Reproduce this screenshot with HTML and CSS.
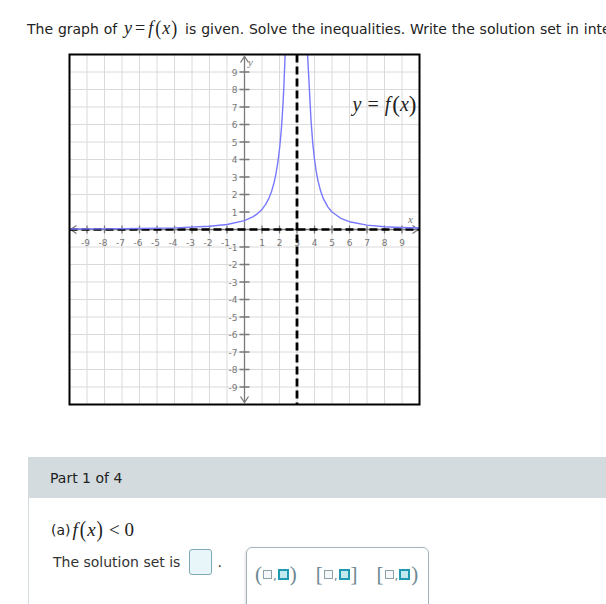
FILE: index.html
```html
<!DOCTYPE html>
<html>
<head>
<meta charset="utf-8">
<link rel="stylesheet" href="styles.css">
</head>
<body>
<div class="title">The graph of <span class="math"><i>y</i><span class="eq">=</span><i class="fi">f</i><span class="paren">(</span><i>x</i><span class="paren">)</span></span> is given. Solve the inequalities. Write the solution set in interval notation.</div>

<svg class="graph" width="356" height="356" viewBox="0 0 356 356">
  <defs>
    <clipPath id="frame"><rect x="0" y="0" width="350" height="350"/></clipPath>
  </defs>
  <g transform="translate(1.5,1.5)">
    <rect x="0" y="0" width="350" height="350" fill="#fff"/>
    <path class="grid" d="M17.5 0V350M35 0V350M52.5 0V350M70 0V350M87.5 0V350M105 0V350M122.5 0V350M140 0V350M157.5 0V350M192.5 0V350M210 0V350M227.5 0V350M245 0V350M262.5 0V350M280 0V350M297.5 0V350M315 0V350M332.5 0V350
    M0 17.5H350M0 35H350M0 52.5H350M0 70H350M0 87.5H350M0 105H350M0 122.5H350M0 140H350M0 157.5H350M0 192.5H350M0 210H350M0 227.5H350M0 245H350M0 262.5H350M0 280H350M0 297.5H350M0 315H350M0 332.5H350"/>
    <path class="axis" d="M175 2V348M1 175H349"/>
    <path class="axis" d="M171 8L175 2L179 8M171 342L175 348L179 342M7 171L1 175L7 179M343 171L349 175L343 179"/>
    <path class="axis" d="M170 17.5H180M170 35H180M170 52.5H180M170 70H180M170 87.5H180M170 105H180M170 122.5H180M170 140H180M170 157.5H180M170 192.5H180M170 210H180M170 227.5H180M170 245H180M170 262.5H180M170 280H180M170 297.5H180M170 315H180M170 332.5H180
    M17.5 171V179M35 171V179M52.5 171V179M70 171V179M87.5 171V179M105 171V179M122.5 171V179M140 171V179M157.5 171V179M192.5 171V179M210 171V179M227.5 171V179M245 171V179M262.5 171V179M280 171V179M297.5 171V179M315 171V179M332.5 171V179"/>
    <g class="tick-x">
      <text x="16" y="191.5">-9</text>
      <text x="33.5" y="191.5">-8</text>
      <text x="51" y="191.5">-7</text>
      <text x="68.5" y="191.5">-6</text>
      <text x="86" y="191.5">-5</text>
      <text x="103.5" y="191.5">-4</text>
      <text x="121" y="191.5">-3</text>
      <text x="138.5" y="191.5">-2</text>
      <text x="156" y="191.5">-1</text>
      <text x="192.5" y="191.5">1</text>
      <text x="210" y="191.5">2</text>
      <text x="227.5" y="191.5">3</text>
      <text x="245" y="191.5">4</text>
      <text x="262.5" y="191.5">5</text>
      <text x="280" y="191.5">6</text>
      <text x="297.5" y="191.5">7</text>
      <text x="315" y="191.5">8</text>
      <text x="332.5" y="191.5">9</text>
    </g>
    <g class="tick-y">
      <text x="168" y="21">9</text>
      <text x="168" y="38.5">8</text>
      <text x="168" y="56">7</text>
      <text x="168" y="73.5">6</text>
      <text x="168" y="91">5</text>
      <text x="168" y="108.5">4</text>
      <text x="168" y="126">3</text>
      <text x="168" y="143.5">2</text>
      <text x="168" y="161">1</text>
      <text x="168" y="196">-1</text>
      <text x="168" y="213.5">-2</text>
      <text x="168" y="231">-3</text>
      <text x="168" y="248.5">-4</text>
      <text x="168" y="266">-5</text>
      <text x="168" y="283.5">-6</text>
      <text x="168" y="301">-7</text>
      <text x="168" y="318.5">-8</text>
      <text x="168" y="336">-9</text>
    </g>
    <text class="axis-name" x="178.5" y="11">y</text>
    <text class="axis-name" x="338.5" y="168">x</text>
    <path class="dash" d="M0 175H350"/>
    <path class="dash dash-v" d="M227.5 0V350"/>
    <g clip-path="url(#frame)">
      <polyline class="curve" points="0,174.52 35,174.33 70,174.0 105,173.36 140,171.78 157.5,169.97 175,166.06 183.75,162.12 188.13,159.1 192.5,154.88 196,150.15 199.5,143.55 202.13,136.71 204.75,127.37 206.5,119.1 208.25,108.47 210,94.5 210.88,85.8 211.75,75.6 212.63,63.58 213.5,49.22 214.38,31.89 215.64,0 215.9,-5"/>
      <polyline class="curve" points="237.9,-5 238.06,0 239.75,32.14 241.5,65.63 243.25,88.58 245,105 246.75,117.15 248.5,126.39 251.13,136.59 253.75,143.89 258.13,152.14 262.5,157.5 271.25,163.8 280,167.22 297.5,170.63 315,172.2 332.5,173.06 350,173.57"/>
    </g>
    <text class="fn-label" x="283" y="56"><tspan class="it">y</tspan><tspan dx="6">=</tspan><tspan class="it" dx="6">f</tspan><tspan class="big-paren" dx="2" dy="1">(</tspan><tspan class="it" dy="-1">x</tspan><tspan class="big-paren" dy="1">)</tspan></text>
    <rect class="frame" x="0" y="0" width="350" height="350"/>
  </g>
</svg>

<div class="part">
  <div class="part-head">Part 1 of 4</div>
  <div class="part-body">
    <div class="question"><span class="lbl">(a)</span><span class="math big"><i class="fi">f</i><span class="paren">(</span><i>x</i><span class="paren">)</span><span class="lt">&lt;</span>0</span></div>
    <div class="answer-row">
      <div class="answer">
        <span class="ans-text">The solution set is</span>
        <span class="input-box"></span>
        <span class="period">.</span>
      </div>
      <div class="palette">
        <div class="btn"><span class="br">(</span><span class="sq"></span><span class="comma">,</span><span class="sq active"></span><span class="br">)</span></div>
        <div class="btn"><span class="br">[</span><span class="sq"></span><span class="comma">,</span><span class="sq active"></span><span class="br">]</span></div>
        <div class="btn"><span class="br">[</span><span class="sq"></span><span class="comma">,</span><span class="sq active"></span><span class="br">)</span></div>
      </div>
    </div>
  </div>
</div>
</body>
</html>
```

FILE: styles.css
```css
html, body {
  margin: 0;
  padding: 0;
  background: #fff;
}
body {
  width: 606px;
  height: 604px;
  overflow: hidden;
  font-family: "DejaVu Sans", Verdana, sans-serif;
  font-size: 14px;
  color: #222;
}
.title {
  padding: 18px 0 5px 27px;
  line-height: 20px;
  height: 20px;
  white-space: nowrap;
  overflow: hidden;
  word-spacing: 0.4px;
}
.math {
  font-family: "Liberation Serif", "DejaVu Serif", serif;
  font-size: 18px;
  color: #222;
  margin: 0 2px;
}
.math i {
  font-style: italic;
}
.eq {
  padding: 0 3px;
}
.fi {
  padding-right: 1px;
}
.paren {
  display: inline-block;
  transform: scaleY(1.2);
  padding: 0 1px;
}
.graph {
  display: block;
  margin: 10px 0 0 68px;
}
.grid {
  stroke: #dadada;
  stroke-width: 1;
  fill: none;
}
.axis {
  stroke: #7a7a7a;
  stroke-width: 1.3;
  fill: none;
}
.tick-x text, .tick-y text {
  font-family: "DejaVu Sans", Verdana, sans-serif;
  font-size: 9px;
  fill: #777;
}
.tick-x text {
  text-anchor: middle;
}
.tick-y text {
  text-anchor: end;
}
.axis-name {
  font-family: "Liberation Serif", serif;
  font-style: italic;
  font-size: 11px;
  fill: #777;
}
.dash {
  stroke: #000;
  stroke-width: 2.6;
  stroke-dasharray: 8 4;
  fill: none;
}
.dash-v {
  stroke-width: 2.8;
}
.curve {
  fill: none;
  stroke: #7878ff;
  stroke-width: 1.4;
  stroke-linejoin: round;
}
.fn-label {
  font-family: "Liberation Serif", serif;
  font-size: 20px;
  fill: #222;
}
.fn-label .it {
  font-style: italic;
}
.fn-label .big-paren {
  font-size: 23px;
}
.frame {
  fill: none;
  stroke: #000;
  stroke-width: 2;
}
.part {
  margin: 48px 0 0 28px;
  border-left: 1px solid #d5dcdf;
  height: 160px;
}
.part-head {
  background: #d3dbde;
  height: 41px;
  line-height: 42px;
  padding-left: 21px;
  font-size: 14px;
  color: #222;
}
.part-body {
  padding: 20px 0 0 22px;
}
.question {
  height: 24px;
  line-height: 24px;
  display: flex;
  align-items: center;
}
.lbl {
  font-size: 14px;
  margin-right: 0;
}
.big {
  font-size: 19px;
}
.lt {
  padding: 0 5px;
}
.answer-row {
  display: flex;
  align-items: flex-start;
  margin-top: 5px;
}
.answer {
  display: flex;
  align-items: center;
  height: 30px;
  padding-left: 2px;
}
.ans-text {
  font-size: 14px;
  color: #333;
}
.input-box {
  display: inline-block;
  width: 21px;
  height: 24px;
  margin-left: 9px;
  border: 1px solid #7fa9b6;
  border-radius: 3px;
  background: #e8f5f9;
}
.period {
  margin-left: 5px;
  font-size: 14px;
  color: #333;
}
.palette {
  margin-left: 24px;
  width: 183px;
  height: 70px;
  border: 1px solid #a3b5bc;
  border-radius: 6px;
  box-shadow: -1px 1px 3px rgba(0,0,0,0.12);
  display: flex;
  align-items: flex-start;
  gap: 19px;
  padding: 17px 0 0 8px;
  box-sizing: border-box;
}
.btn {
  display: flex;
  align-items: center;
  height: 18px;
}
.br {
  font-family: "Liberation Serif", serif;
  font-size: 21px;
  line-height: 18px;
  color: #6d8791;
}
.sq {
  display: inline-block;
  width: 7px;
  height: 7px;
  border: 1.5px solid #8fa1a8;
  background: #f5f7f8;
  margin: 0 1px;
}
.sq.active {
  width: 7px;
  height: 7px;
  border: 2px solid #1f9ab2;
  background: #c3e9f0;
}
.comma {
  font-size: 12px;
  color: #6d8791;
  line-height: 12px;
  margin-top: 4px;
}
```
